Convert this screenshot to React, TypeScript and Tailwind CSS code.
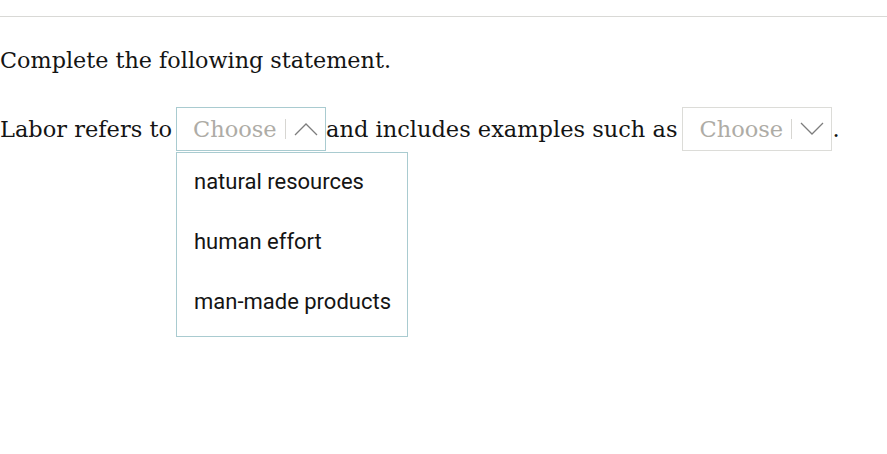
import React from "react";

function Chevron({ up }: { up: boolean }) {
  return (
    <svg width="24" height="14" viewBox="0 0 24 14" fill="none" stroke="#7d7d7d" strokeWidth="1.3">
      {up ? <path d="M1 13 L12 2 L23 13" /> : <path d="M1 1 L12 12 L23 1" />}
    </svg>
  );
}

function Select({ open }: { open: boolean }) {
  return (
    <div
      className={`flex h-[44px] w-[150px] shrink-0 items-center border pl-[16px] ${
        open ? "border-[#a9cbd0]" : "border-[#dcdcd8]"
      }`}
    >
      <span className="text-[#aeaca6]">Choose</span>
      <span className="ml-[8px] h-[20px] w-px bg-[#d7d6d2]" />
      <span className="ml-[8px] flex items-center">
        <Chevron up={open} />
      </span>
    </div>
  );
}

export default function App() {
  return (
    <div
      className="h-[454px] w-[887px] bg-white text-[#141414]"
      style={{ fontFamily: '"DejaVu Serif", serif' }}
    >
      <div className="h-[17px] border-b border-[#d9d9d6]" />
      <div className="pt-[27px] text-[22.3px] leading-[32px]">Complete the following statement.</div>
      <div className="mt-[31px] flex items-center text-[22.5px] leading-[32px]">
        <span className="mr-[4px]">Labor refers to</span>
        <div className="relative">
          <Select open={true} />
          <div
            className="absolute left-0 top-[45px] w-[232px] border border-[#a9cbd0] bg-white pb-[17px] pl-[17px] pt-[12px] text-[22px] text-[#141414]"
            style={{ fontFamily: "Roboto, sans-serif" }}
          >
            <div className="h-[60px] leading-[34px]">natural resources</div>
            <div className="h-[60px] leading-[34px]">human effort</div>
            <div className="leading-[34px]">man-made products</div>
          </div>
        </div>
        <span className="mr-[5px]">and includes examples such as</span>
        <Select open={false} />
        <span>.</span>
      </div>
    </div>
  );
}
